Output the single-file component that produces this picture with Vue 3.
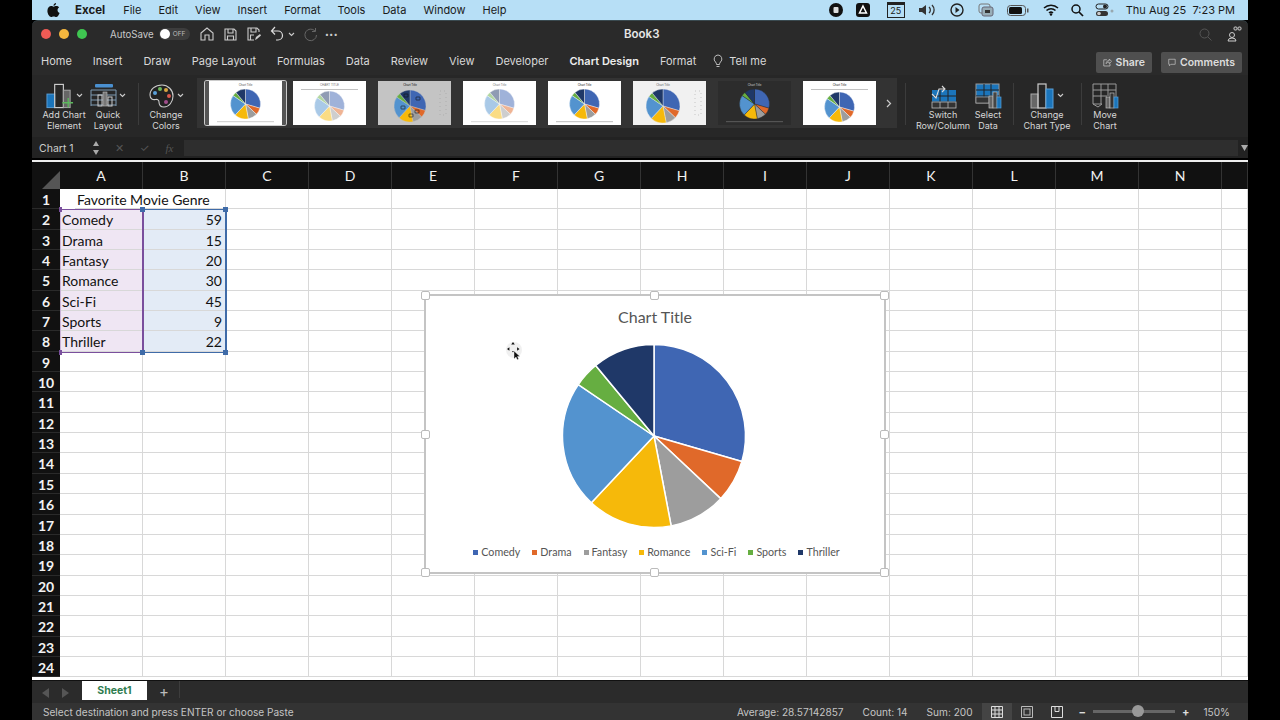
<template>
  <div class="screen">
    <div class="menubar">
      <svg class="apple" width="13" height="15" viewBox="0 0 13 15"><path d="M9 0c.1 1.3-1 2.8-2.500 2.800C6.300 1.500 7.600.2 9 0zM6.600 3.700c.7 0 1.500-.7 2.800-.7 1 0 2 .5 2.700 1.400-2.300 1.400-1.900 4.500.5 5.500-.6 1.600-2 4.100-3.400 4.100-1 0-1.300-.6-2.500-.6s-1.600.6-2.500.6C2.400 14 .4 10.800.4 8c0-3 2-4.900 3.800-4.900 1.100 0 1.800.6 2.400.6z" fill="#111"/></svg>
      <span class="app-name">Excel</span>
      <span v-for="m in menus" :key="m">{{ m }}</span>
      <div class="tray">
        <svg width="16" height="16" viewBox="0 0 16 16"><circle cx="8" cy="8" r="7" fill="#111"/><rect x="5.500" y="5" width="5" height="6" rx="1" fill="#ddd"/></svg>
        <svg class="tight" width="16" height="16" viewBox="0 0 16 16"><rect x="1" y="1" width="14" height="14" rx="3" fill="#111"/><path d="M8 4l3.500 7h-7z" fill="none" stroke="#fff" stroke-width="1.500"/></svg>
        <div class="cal">25</div>
        <svg width="18" height="14" viewBox="0 0 18 14"><path d="M1 5h3l4-3v10L4 9H1z" fill="#333"/><path d="M11 4a4 4 0 010 6M14 2a7 7 0 010 10" fill="none" stroke="#333" stroke-width="1.300"/></svg>
        <svg width="16" height="16" viewBox="0 0 16 16"><circle cx="8" cy="8" r="6" fill="none" stroke="#222" stroke-width="1.400"/><path d="M6.500 5l4 3-4 3z" fill="#222"/></svg>
        <svg width="16" height="14" viewBox="0 0 16 14"><rect x="1" y="1" width="11" height="9" rx="2" fill="none" stroke="#777"/><rect x="4" y="4" width="11" height="9" rx="2" fill="#99aeb8" stroke="#667"/><rect x="7" y="7" width="5" height="3" fill="#333"/></svg>
        <svg width="22" height="11" viewBox="0 0 22 11"><rect x=".5" y=".5" width="18" height="10" rx="3" fill="none" stroke="#555"/><rect x="2" y="2" width="13" height="7" rx="1.500" fill="#111"/><rect x="20" y="3.500" width="1.500" height="4" fill="#555"/></svg>
        <svg class="wide" width="16" height="12" viewBox="0 0 16 12"><path d="M1 4a10 10 0 0114 0M3.500 6.500a6.500 6.500 0 019 0M6 9a3 3 0 014 0" fill="none" stroke="#111" stroke-width="1.500"/><circle cx="8" cy="10.500" r="1.200" fill="#111"/></svg>
        <svg class="tight" width="14" height="14" viewBox="0 0 14 14"><circle cx="6" cy="6" r="4" fill="none" stroke="#111" stroke-width="1.500"/><path d="M9 9l4 4" stroke="#111" stroke-width="1.700"/></svg>
        <svg class="tight" width="20" height="14" viewBox="0 0 20 14"><rect x="1" y="1" width="12" height="5" rx="2.500" fill="none" stroke="#222"/><circle cx="10" cy="3.500" r="2" fill="#222"/><rect x="1" y="8" width="12" height="5" rx="2.500" fill="#333"/><circle cx="4" cy="10.500" r="1.800" fill="#ccc"/><circle cx="17" cy="8" r="1.500" fill="#98a8b0"/></svg>
        <span class="clock">Thu Aug 25&nbsp; 7:23 PM</span>
      </div>
    </div>

    <div class="titlebar">
      <i class="light red"></i><i class="light yellow"></i><i class="light green"></i>
      <span class="autosave">AutoSave</span>
      <div class="toggle"><b></b><span>OFF</span></div>
      <svg class="qa" width="16" height="16" viewBox="0 0 16 16"><path d="M2 7l6-5 6 5v7h-4v-5H6v5H2z" fill="none" stroke="#ccc" stroke-width="1.100"/></svg>
      <svg class="qa" width="15" height="15" viewBox="0 0 15 15"><path d="M2 2h9l2 2v9H2zM5 2v4h5V2M4.500 13V9h6v4" fill="none" stroke="#ccc" stroke-width="1.100"/></svg>
      <svg class="qa" width="16" height="16" viewBox="0 0 16 16"><path d="M8 14H2V2h9l2 2v2M5 2v4h5V2M4.500 14V9H8" fill="none" stroke="#ccc" stroke-width="1.100"/><path d="M9 14l1-3 4-3 1 1.500-4 3.500z" fill="#ccc"/></svg>
      <svg class="qa" width="15" height="16" viewBox="0 0 15 16"><path d="M5 1L1.500 5 5 8.500M2 5h6a4.500 4.500 0 010 9H6" fill="none" stroke="#ddd" stroke-width="1.200"/></svg>
      <svg class="chev" width="7" height="5" viewBox="0 0 7 5"><path d="M1 1l2.500 2.500L6 1" fill="none" stroke="#ccc" stroke-width="1.100"/></svg>
      <svg class="qa redo" width="15" height="15" viewBox="0 0 15 15"><path d="M12 4a5.800 5.800 0 10 1.500 4M12.500 1v3.500H9" fill="none" stroke="#666" stroke-width="1"/></svg>
      <span class="more">···</span>
      <span class="doc">Book3</span>
      <svg class="find" width="13" height="13" viewBox="0 0 13 13"><circle cx="5.500" cy="5.500" r="4.500" fill="none" stroke="#555"/><path d="M9 9l3.500 3.500" stroke="#555"/></svg>
      <svg class="people" width="15" height="16" viewBox="0 0 15 16"><circle cx="5" cy="9" r="2.500" fill="none" stroke="#ccc"/><path d="M1 15a4 3 0 018 0z" fill="none" stroke="#ccc"/><rect x="7" y="1" width="3" height="3" rx="1" fill="none" stroke="#ccc"/><rect x="11" y="1" width="3" height="3" rx="1" fill="none" stroke="#ccc"/></svg>
    </div>

    <div class="tabs">
      <span v-for="t in tabs" :key="t" :class="{ active: t === 'Chart Design' }">{{ t }}</span>
      <span class="tellme">
        <svg width="10" height="15" viewBox="0 0 10 15"><path d="M5 1a4 4 0 00-2.500 7c.7.7 1 1.500 1 2.500h3c0-1 .3-1.800 1-2.500A4 4 0 005 1zM3.500 12.500h3" fill="none" stroke="#bbb"/></svg>
        Tell me
      </span>
      <div class="tab-btns">
        <button class="share">
          <svg width="11" height="11" viewBox="0 0 11 11"><path d="M5 2H1v8h8V7M4 7c0-3 2-4 4-4V1l3 3-3 3V5C6 5 5 5.500 4 7z" fill="none" stroke="#ccc" stroke-width=".9"/></svg>
          Share
        </button>
        <button class="comments">
          <svg width="11" height="11" viewBox="0 0 11 11"><path d="M1 1h9v7H4l-2 2V8H1z" fill="none" stroke="#ccc" stroke-width=".9"/></svg>
          Comments
        </button>
      </div>
    </div>

    <div class="ribbon">
      <div class="rb add">
        <div class="rb-icon">
          <svg width="28" height="26" viewBox="0 0 29 26"><rect x="1" y="11" width="8" height="14" fill="#1b75bb" stroke="#5aa0d8"/><rect x="9" y="1" width="9" height="24" fill="none" stroke="#ccc" stroke-width="1.200"/><rect x="18" y="7" width="7" height="18" fill="#666" stroke="#aaa"/><path d="M23 15v10M17 20h11" stroke="#5cb85c" stroke-width="1.400"/></svg>
          <svg class="chev" width="7" height="5" viewBox="0 0 7 5"><path d="M1 1l2.500 2.500L6 1" fill="none" stroke="#ccc" stroke-width="1.100"/></svg>
        </div>
        <span>Add Chart<br>Element</span>
      </div>
      <div class="rb quick">
        <div class="rb-icon">
          <svg width="27" height="26" viewBox="0 0 27 26"><rect x="5" y="1" width="18" height="3.500" rx="1" fill="#4a90d0"/><path d="M1 7h25M1 12h25M1 17h25M1 22h25M1 7v16M26 7v16" fill="none" stroke="#7f9bb3" stroke-width="1"/><rect x="8" y="12" width="4" height="11" fill="none" stroke="#ccc"/><rect x="13" y="9" width="4" height="14" fill="#777" stroke="#bbb" stroke-width=".6"/><rect x="18" y="14" width="4" height="9" fill="none" stroke="#ccc"/></svg>
          <svg class="chev" width="7" height="5" viewBox="0 0 7 5"><path d="M1 1l2.500 2.500L6 1" fill="none" stroke="#ccc" stroke-width="1.100"/></svg>
        </div>
        <span>Quick<br>Layout</span>
      </div>
      <i class="rsep first"></i>
      <div class="rb colors">
        <div class="rb-icon">
          <svg width="26" height="26" viewBox="0 0 26 26"><path d="M13 2C6 2 1 6.500 1 12c0 4 3 5 5.500 4.500 2-.4 3.500.5 3.500 2.500 0 3 2 5 5 5 5 0 9-5 9-11S19 2 13 2z" fill="#222" stroke="#ccc" stroke-width="1.100"/><circle cx="6" cy="10" r="2" fill="#5aa0d8"/><circle cx="11" cy="6" r="2" fill="#6cb85c"/><circle cx="17" cy="7" r="2" fill="#d9a441"/><circle cx="20" cy="13" r="2" fill="#d9584d"/><circle cx="17" cy="19" r="2" fill="#a04d8c"/></svg>
          <svg class="chev" width="7" height="5" viewBox="0 0 7 5"><path d="M1 1l2.500 2.500L6 1" fill="none" stroke="#ccc" stroke-width="1.100"/></svg>
        </div>
        <span>Change<br>Colors</span>
      </div>

      <div class="gallery">
        <div v-for="(th, i) in thumbs" :key="i" class="thumb" :class="{ picked: i === 0 }">
          <svg width="73" height="44" viewBox="0 0 73 44">
            <rect width="73" height="44" :fill="th.bg"/>
            <text :x="th.cx" y="5" text-anchor="middle" font-size="3" font-family="Liberation Sans, sans-serif" :fill="th.ink">{{ th.title }}</text>
            <path v-for="s in pieSlices(th.cx, th.cy, th.r)" :key="s.name" :d="s.d" :fill="s.color" :fill-opacity="th.pale ? 0.5 : 1" :stroke="th.bg" stroke-width=".4"/>
            <template v-if="th.boxes">
              <rect v-for="b in th.boxes" :key="b[0] + '-' + b[1]" :x="b[0]" :y="b[1]" width="4" height="3" rx=".5" fill="none" stroke="#111" stroke-width=".6"/>
            </template>
            <rect v-if="th.side" x="62" y="10" width="6" height="24" fill="none" stroke="#999" stroke-width=".5" stroke-dasharray="1 3"/>
            <rect v-else-if="th.top" x="8" y="8" width="57" height=".6" fill="#999"/>
            <rect v-else x="8" y="40.500" width="57" height=".6" :fill="th.ink" opacity=".5"/>
          </svg>
        </div>
        <svg class="more-chev" width="6" height="9" viewBox="0 0 6 9"><path d="M1 1l3.500 3.500L1 8" fill="none" stroke="#ccc" stroke-width="1.200"/></svg>
      </div>

      <i class="rsep after-gallery"></i>
      <div class="rb switch">
        <div class="rb-icon">
          <svg width="28" height="26" viewBox="0 0 28 26"><rect x="3" y="7" width="24" height="18" fill="#1b75bb"/><path d="M3 13h24M3 19h24M11 7v18M19 7v18" stroke="#222"/><rect x="3" y="19" width="24" height="6" fill="#333" stroke="#bbb" stroke-width=".8"/><path d="M11 19v6M19 19v6" stroke="#bbb" stroke-width=".8"/><path d="M3 11l4 4 3-9h5M13 3l3 3-3 3" fill="none" stroke="#ddd" stroke-width="1.100"/></svg>
        </div>
        <span>Switch<br>Row/Column</span>
      </div>
      <div class="rb select">
        <div class="rb-icon">
          <svg width="27" height="26" viewBox="0 0 27 26"><rect x="1" y="1" width="23" height="19" fill="#1b75bb" stroke="#999"/><path d="M1 7h23M1 13h23M9 1v19M16 1v19" stroke="#222"/><rect x="1" y="14" width="13" height="6" fill="#333" stroke="#aaa" stroke-width=".7"/><rect x="14" y="13" width="4" height="12" fill="#666" stroke="#bbb" stroke-width=".7"/><rect x="18" y="9" width="4" height="16" fill="#444" stroke="#bbb" stroke-width=".7"/><rect x="22" y="14" width="4" height="11" fill="#1b75bb" stroke="#5aa0d8" stroke-width=".7"/></svg>
        </div>
        <span>Select<br>Data</span>
      </div>
      <i class="rsep after-select"></i>
      <div class="rb ctype">
        <div class="rb-icon">
          <svg width="25" height="26" viewBox="0 0 25 26"><rect x="1" y="11" width="7" height="14" fill="#666" stroke="#aaa"/><rect x="8" y="1" width="8" height="24" fill="none" stroke="#ccc" stroke-width="1.200"/><rect x="16" y="6" width="7" height="19" fill="#1b75bb" stroke="#5aa0d8"/></svg>
          <svg class="chev" width="7" height="5" viewBox="0 0 7 5"><path d="M1 1l2.500 2.500L6 1" fill="none" stroke="#ccc" stroke-width="1.100"/></svg>
        </div>
        <span>Change<br>Chart Type</span>
      </div>
      <i class="rsep after-type"></i>
      <div class="rb move">
        <div class="rb-icon">
          <svg width="27" height="26" viewBox="0 0 27 26"><path d="M1 1h23v13M1 1v20h9M1 7h23M1 13h14M9 1v20M16 1v12M1 21l5 3 4-3" fill="none" stroke="#999"/><rect x="14" y="14" width="4" height="11" fill="#666" stroke="#bbb" stroke-width=".7"/><rect x="18" y="10" width="4" height="15" fill="#333" stroke="#bbb" stroke-width=".7"/><rect x="22" y="14" width="4" height="11" fill="#1b75bb" stroke="#5aa0d8" stroke-width=".7"/></svg>
        </div>
        <span>Move<br>Chart</span>
      </div>
    </div>

    <div class="formula">
      <span class="name">Chart 1</span>
      <svg class="stepper" width="8" height="16" viewBox="0 0 8 16"><path d="M4 1l3 5H1zM4 15l3-5H1z" fill="#aaa"/></svg>
      <span class="fx-x">✕</span>
      <span class="fx-ok">✓</span>
      <span class="fx">fx</span>
      <div class="fx-input"></div>
      <svg class="caret" width="7" height="6" viewBox="0 0 7 6"><path d="M0 0h7L3.500 6z" fill="#aaa"/></svg>
    </div>

    <div class="sheet">
      <div class="corner"><i></i></div>
      <div v-for="c in cols" :key="c" class="colhead">{{ c }}</div>
      <div class="colhead"></div>
      <template v-for="r in 24" :key="r">
        <div class="rowhead">{{ r }}</div>
        <div v-for="(c, ci) in cols.concat('')" :key="c" class="cell" :class="cellClass(r, ci)">{{ cellText(r, ci) }}</div>
      </template>

      <div class="sel sel-a"><i class="h bl-a"></i><i class="h tl-a"></i></div>
      <div class="sel sel-b"><i class="h tl"></i><i class="h tr"></i><i class="h bl"></i><i class="h br"></i></div>

      <div class="chart">
        <div class="chart-title">Chart Title</div>
        <svg class="pie" width="190" height="190" viewBox="0 0 190 190">
          <path v-for="s in pieSlices(95, 95, 91.500)" :key="s.name" :d="s.d" :fill="s.color" stroke="#fff" stroke-width="1.500"/>
        </svg>
        <div class="legend">
          <span v-for="d in genres" :key="d.name"><i :style="{ background: d.color }"></i>{{ d.name }}</span>
        </div>
        <i v-for="g in grips" :key="g" class="grip" :class="g"></i>
      </div>

      <svg class="cursor" width="18" height="20" viewBox="0 0 18 20">
        <circle cx="9" cy="9" r="8" fill="#ddd" opacity=".45"/>
        <path d="M8 1l1.800 2.500H6.200zM8 11.500l-1 -1.500h2zM2 8l2.400-1.700v3.400zM14.500 8l-2.400-1.700v3.400z" fill="#111"/>
        <path d="M9 10v8l2-2 1.200 2.800 1.500-.7-1.200-2.600H15z" fill="#111" stroke="#fff" stroke-width=".4"/>
      </svg>
    </div>

    <div class="sheetbar">
      <svg class="nav" width="8" height="10" viewBox="0 0 8 10"><path d="M7 0v10L0 5z" fill="#555"/></svg>
      <svg class="nav" width="8" height="10" viewBox="0 0 8 10"><path d="M1 0v10l7-5z" fill="#555"/></svg>
      <div class="sheet-tab">Sheet1</div>
      <span class="plus">+</span>
      <i class="bar-sep"></i>
    </div>

    <div class="status">
      <span class="hint">Select destination and press ENTER or choose Paste</span>
      <span class="stat">Average: 28.57142857</span>
      <span class="stat">Count: 14</span>
      <span class="stat">Sum: 200</span>
      <div class="view on">
        <svg width="12" height="12" viewBox="0 0 12 12"><path d="M.5.500h11v11H.500zM.5 4h11M.5 8h11M4 .5v11M8 .5v11" fill="none" stroke="#ddd"/></svg>
      </div>
      <div class="view">
        <svg width="12" height="12" viewBox="0 0 12 12"><path d="M.5.500h11v11H.500z" fill="none" stroke="#bbb"/><rect x="3" y="3" width="6" height="6" fill="none" stroke="#bbb"/></svg>
      </div>
      <div class="view">
        <svg width="12" height="12" viewBox="0 0 12 12"><path d="M.5 11.500V.5h11v11zM4 .5v5h4v-5" fill="none" stroke="#ddd"/></svg>
      </div>
      <div class="zoom">
        <b>−</b>
        <div class="track"><i></i></div>
        <b>+</b>
      </div>
      <span class="pct">150%</span>
    </div>
  </div>
</template>

<script setup>
const menus = ['File', 'Edit', 'View', 'Insert', 'Format', 'Tools', 'Data', 'Window', 'Help']
const tabs = ['Home', 'Insert', 'Draw', 'Page Layout', 'Formulas', 'Data', 'Review', 'View', 'Developer', 'Chart Design', 'Format']
const cols = ['A', 'B', 'C', 'D', 'E', 'F', 'G', 'H', 'I', 'J', 'K', 'L', 'M', 'N']
const grips = ['g-tl', 'g-t', 'g-tr', 'g-l', 'g-r', 'g-bl', 'g-b', 'g-br']

const genres = [
  { name: 'Comedy', value: 59, color: '#3f66b3' },
  { name: 'Drama', value: 15, color: '#e0692a' },
  { name: 'Fantasy', value: 20, color: '#9d9d9d' },
  { name: 'Romance', value: 30, color: '#f6b90a' },
  { name: 'Sci-Fi', value: 45, color: '#5393cf' },
  { name: 'Sports', value: 9, color: '#66ae41' },
  { name: 'Thriller', value: 22, color: '#1f3868' }
]

const thumbs = [
  { bg: '#fff', ink: '#555', title: 'Chart Title', cx: 36.500, cy: 23, r: 15 },
  { bg: '#fff', ink: '#777', title: 'CHART TITLE', cx: 36.500, cy: 25, r: 15, pale: true, top: true },
  { bg: '#c4c4c4', ink: '#111', title: 'Chart Title', cx: 32, cy: 25, r: 16, side: true, boxes: [[26, 13], [38, 16], [23, 25], [37, 29], [31, 33]] },
  { bg: '#fff', ink: '#777', title: 'Chart Title', cx: 36.500, cy: 23, r: 15, pale: true },
  { bg: '#fff', ink: '#222', title: 'Chart Title', cx: 36.500, cy: 23, r: 15 },
  { bg: '#f1f1f1', ink: '#666', title: 'Chart Title', cx: 30, cy: 25, r: 17, side: true },
  { bg: '#2c2c2c', ink: '#ccc', title: 'Chart Title', cx: 36.500, cy: 23, r: 15 },
  { bg: '#fff', ink: '#222', title: 'Chart Title', cx: 36.500, cy: 26, r: 15, top: true }
]

const total = genres.reduce((sum, g) => sum + g.value, 0)

// clockwise from 12 o'clock, same as the excel pie
const pieSlices = (cx, cy, r) => {
  let a = -Math.PI / 2
  return genres.map(g => {
    const b = a + (g.value / total) * Math.PI * 2
    const x1 = cx + r * Math.cos(a)
    const y1 = cy + r * Math.sin(a)
    const x2 = cx + r * Math.cos(b)
    const y2 = cy + r * Math.sin(b)
    const large = b - a > Math.PI ? 1 : 0
    a = b
    return {
      name: g.name,
      color: g.color,
      d: `M${cx} ${cy}L${x1.toFixed(2)} ${y1.toFixed(2)}A${r} ${r} 0 ${large} 1 ${x2.toFixed(2)} ${y2.toFixed(2)}Z`
    }
  })
}

const cellText = (r, ci) => {
  if (r === 1 && ci === 0) return 'Favorite Movie Genre'
  if (r >= 2 && r <= 8) {
    const g = genres[r - 2]
    if (ci === 0) return g.name
    if (ci === 1) return g.value
  }
  return ''
}

const cellClass = (r, ci) => {
  if (r === 1 && ci === 0) return 'merged'
  if (r >= 2 && r <= 8 && ci === 0) return 'in-a'
  if (r >= 2 && r <= 8 && ci === 1) return 'in-b'
  return ''
}
</script>

<style>
html, body { margin: 0; background: #000; }
</style>

<style scoped>
.screen {
  width: 1216px;
  height: 720px;
  margin-left: 32px;
  display: flex;
  flex-direction: column;
  overflow: hidden;
  background: #000;
  font-family: Inter, "Liberation Sans", sans-serif;
  color: #ddd;
}

.menubar {
  height: 20px;
  flex: none;
  background: #b7dff6;
  color: #1a1a1a;
  font-size: 11px;
  display: flex;
  align-items: center;
  gap: 17px;
  padding-left: 15px;
}
.apple { margin-right: -2px; }
.app-name { font-weight: 700; margin-right: 1px; font-size: 11.500px; }
.tray {
  margin-left: auto;
  display: flex;
  align-items: center;
  gap: 13px;
  padding-right: 13px;
}
.tray .tight { margin-left: -2px; }
.tray .wide { margin-left: 1px; }
.cal {
  width: 16px;
  height: 12px;
  border: 1px solid #222;
  border-top-width: 3px;
  font-size: 9px;
  line-height: 12px;
  text-align: center;
  margin-left: 3px;
}
.clock { font-size: 11px; white-space: nowrap; margin-left: -2px; }

.titlebar {
  height: 27px;
  flex: none;
  background: #2a2a2a;
  border-top: 1px solid #3a4a50;
  border-radius: 6px 6px 0 0;
  box-sizing: border-box;
  display: flex;
  align-items: center;
  padding-left: 9px;
  position: relative;
}
.light { width: 10px; height: 10px; border-radius: 50%; margin-right: 8px; }
.red { background: #ee5b55; }
.yellow { background: #f4b73e; }
.green { background: #3fc651; }
.autosave { font-size: 9.700px; color: #c8c8c8; margin-left: 15px; }
.toggle {
  width: 31px;
  height: 12px;
  margin-left: 5px;
  border-radius: 6px;
  background: #3d3d3d;
  display: flex;
  align-items: center;
  font-size: 6.500px;
  color: #bbb;
}
.toggle b { width: 10px; height: 10px; border-radius: 50%; background: #fff; margin: 0 3px 0 1px; }
.qa { margin-left: 8px; }
.toggle + .qa { margin-left: 9px; }
.titlebar .chev { margin-left: 3px; flex: none; }
.redo { margin-left: 8px; }
.more { margin-left: 7px; font-size: 13px; font-weight: 700; color: #ccc; }
.doc {
  position: absolute;
  left: 592px;
  font-size: 11.500px;
  font-weight: 600;
  color: #e6e6e6;
}
.find { margin-left: auto; }
.people { margin: 0 6px 0 15px; }

.tabs {
  height: 28px;
  flex: none;
  background: #2a2a2a;
  display: flex;
  align-items: center;
  gap: 21px;
  padding-left: 9px;
  font-size: 11px;
  color: #d8d8d8;
}
.tabs > span { line-height: 22px; position: relative; white-space: nowrap; }
.tabs .active { font-weight: 600; color: #eee; }
.tabs .active::after {
  content: "";
  position: absolute;
  left: 0;
  right: 0;
  bottom: -5px;
  height: 2px;
  background: #eee;
}
.tellme { display: flex; align-items: center; gap: 6px; margin-left: -4px; }
.tab-btns { margin-left: auto; display: flex; gap: 9px; padding-right: 6px; margin-top: 2px; }
.tab-btns button {
  height: 21px;
  border: 0;
  border-radius: 2px;
  background: #4f4f4f;
  color: #ddd;
  font: 600 10.500px Inter, "Liberation Sans", sans-serif;
  display: flex;
  align-items: center;
  gap: 4px;
  padding: 0 7px;
}
.share { width: 56px; }
.comments { width: 81px; }

.ribbon {
  height: 62px;
  flex: none;
  background: #272727;
  display: flex;
  align-items: stretch;
  position: relative;
  font-size: 9px;
  color: #d8d8d8;
}
.rb {
  display: flex;
  flex-direction: column;
  align-items: center;
  padding-top: 6px;
  line-height: 10.500px;
  text-align: center;
  white-space: nowrap;
  flex: none;
}
.rb-icon { height: 29px; display: flex; align-items: center; gap: 2px; }
.rb-icon .chev { flex: none; }
.add { margin-left: 9px; width: 46px; }
.quick { margin-left: 2px; width: 38px; }
.rsep { width: 1px; background: #3c3c3c; margin: 8px 0 12px; flex: none; }
.rsep.first { margin-left: 11px; }
.colors { margin-left: 7px; width: 40px; }
.gallery {
  width: 700px;
  height: 50px;
  margin: 3px 0 0 11px;
  background: #333;
  display: flex;
  align-items: center;
  flex: none;
  position: relative;
  gap: 12px;
  padding-left: 8px;
  box-sizing: border-box;
}
.thumb { width: 73px; height: 44px; flex: none; }
.thumb svg { display: block; }
.thumb.picked {
  box-shadow: 0 0 0 1px #ccc;
  border-left: 4.500px solid #555;
  border-right: 4.500px solid #555;
  border-radius: 2px;
  margin-right: -5px;
}
.more-chev { position: absolute; right: 5px; top: 21px; }
.rsep.after-gallery { margin-left: 8px; }
.switch { margin-left: 10px; width: 54px; }
.select { margin-left: 3px; width: 30px; }
.rsep.after-select { margin-left: 10px; }
.ctype { margin-left: 9px; width: 48px; }
.rsep.after-type { margin-left: 10px; }
.move { margin-left: 9px; width: 28px; }

.formula {
  height: 21px;
  flex: none;
  background: #222;
  display: flex;
  align-items: center;
  font-size: 10.500px;
  color: #ccc;
  position: relative;
}
.name { margin-left: 7px; width: 53px; padding-top: 1px; }
.stepper { flex: none; }
.fx-x, .fx-ok, .fx { color: #555; font-size: 11px; text-align: center; width: 25px; }
.fx-x { margin-left: 7px; }
.fx { font-family: "Liberation Serif", serif; font-style: italic; }
.fx-input { width: 1054px; height: 16px; background: #2e2e2e; margin-left: 2px; flex: none; }
.caret { margin-left: 3px; flex: none; }

.sheet {
  flex: 1;
  min-height: 0;
  position: relative;
  border-top: 2px solid #eee;
  margin-top: 2px;
  display: grid;
  grid-template-columns: 28px repeat(14, 83px) 26px;
  grid-template-rows: 27px repeat(24, 20.350px);
  background: #fff;
  overflow: hidden;
  font-family: Lato, "Open Sans", sans-serif;
}
.corner { background: #111; position: relative; }
.corner i {
  position: absolute;
  right: 0;
  bottom: 0;
  border-style: solid;
  border-width: 0 0 18px 18px;
  border-color: transparent transparent #555 transparent;
}
.colhead {
  background: #111;
  color: #f2f2f2;
  font-size: 14px;
  line-height: 27px;
  text-align: center;
  border-right: 1px solid #333;
}
.rowhead {
  background: #111;
  color: #f2f2f2;
  font-size: 14px;
  font-weight: 700;
  line-height: 22px;
  text-align: center;
  border-bottom: 1px solid #2a2a2a;
  box-sizing: border-box;
}
.cell {
  box-sizing: border-box;
  border-right: 1px solid #d8d8d8;
  border-bottom: 1px solid #d8d8d8;
  color: #111;
  font-size: 14px;
  line-height: 21px;
  padding: 0 2px;
  white-space: nowrap;
  overflow: visible;
}
.merged { border-right: 0; position: relative; left: 15px; }
.in-a { background: #efe6f3; }
.in-b { background: #e3ebf6; text-align: right; padding-right: 3px; }

.sel { position: absolute; top: 47px; height: 144px; box-sizing: border-box; }
.sel-a { left: 28px; width: 84px; border: 1px solid #7a4f9d; border-left-color: #c9b4d8; border-right-width: 2px; }
.sel-b { left: 111px; width: 84px; border: 1px solid #3f6ba8; border-left-width: 0; border-right-width: 2px; }
.h { position: absolute; width: 5px; height: 5px; background: #3f6ba8; }
.tl { left: -3px; top: -3px; }
.tr { right: -3px; top: -3px; }
.bl { left: -3px; bottom: -3px; }
.br { right: -3px; bottom: -3px; }
.h.tl-a, .h.bl-a { width: 3px; height: 5px; left: -2px; background: #7a4f9d; }
.tl-a { top: -3px; }
.bl-a { bottom: -3px; }

.chart {
  position: absolute;
  left: 392px;
  top: 132px;
  width: 462px;
  height: 280px;
  box-sizing: border-box;
  background: #fff;
  border: 2px solid #c4c4c4;
  display: flex;
  flex-direction: column;
  align-items: center;
}
.chart-title { font-size: 16px; line-height: 22px; color: #555; margin-top: 10px; height: 35px; }
.pie { display: block; margin-right: 2px; }
.legend {
  display: flex;
  gap: 12px;
  font-size: 10.700px;
  line-height: 16px;
  color: #555;
  margin: 13px 0 0 3px;
}
.legend i { display: inline-block; width: 5px; height: 5px; margin-right: 3px; vertical-align: 1px; }
.grip {
  position: absolute;
  width: 7px;
  height: 7px;
  background: #fff;
  border: 1px solid #bbb;
  border-radius: 2px;
}
.g-tl { left: -5px; top: -5px; }
.g-t { left: 224px; top: -5px; }
.g-tr { right: -5px; top: -5px; }
.g-l { left: -5px; top: 134px; }
.g-r { right: -5px; top: 134px; }
.g-bl { left: -5px; bottom: -5px; }
.g-b { left: 224px; bottom: -5px; }
.g-br { right: -5px; bottom: -5px; }
.cursor { position: absolute; left: 473px; top: 179px; }

.sheetbar {
  height: 23px;
  flex: none;
  background: #2b2b2b;
  display: flex;
  align-items: flex-start;
  border-top: 1px solid #111;
  box-sizing: border-box;
}
.nav { margin: 7px 0 0 10px; flex: none; }
.nav + .nav { margin-left: 11px; }
.sheet-tab {
  width: 65px;
  height: 19px;
  margin-left: 13px;
  background: #fff;
  color: #2f7d4f;
  font-size: 10.500px;
  font-weight: 700;
  line-height: 20px;
  text-align: center;
}
.plus { color: #bbb; font-size: 15px; line-height: 21px; margin-left: 12px; }
.bar-sep { width: 1px; height: 17px; background: #3d3d3d; margin-left: 10px; }

.status {
  height: 17px;
  flex: none;
  background: #333;
  display: flex;
  align-items: center;
  font-size: 10.100px;
  color: #c4c4c4;
  padding-left: 11px;
}
.hint { margin-right: auto; }
.stat { margin-right: 19px; }
.stat:nth-of-type(4) { margin-right: 9px; }
.view { width: 30px; height: 17px; display: flex; align-items: center; justify-content: center; }
.view.on { background: #444; }
.zoom { display: flex; align-items: center; gap: 7px; margin-left: 7px; color: #ddd; font-size: 11px; }
.track { width: 82px; height: 3px; background: #666; position: relative; }
.track i { position: absolute; left: 39px; top: -5px; width: 12px; height: 12px; border-radius: 50%; background: #999; }
.pct { margin: 0 18px 0 14px; }
</style>
